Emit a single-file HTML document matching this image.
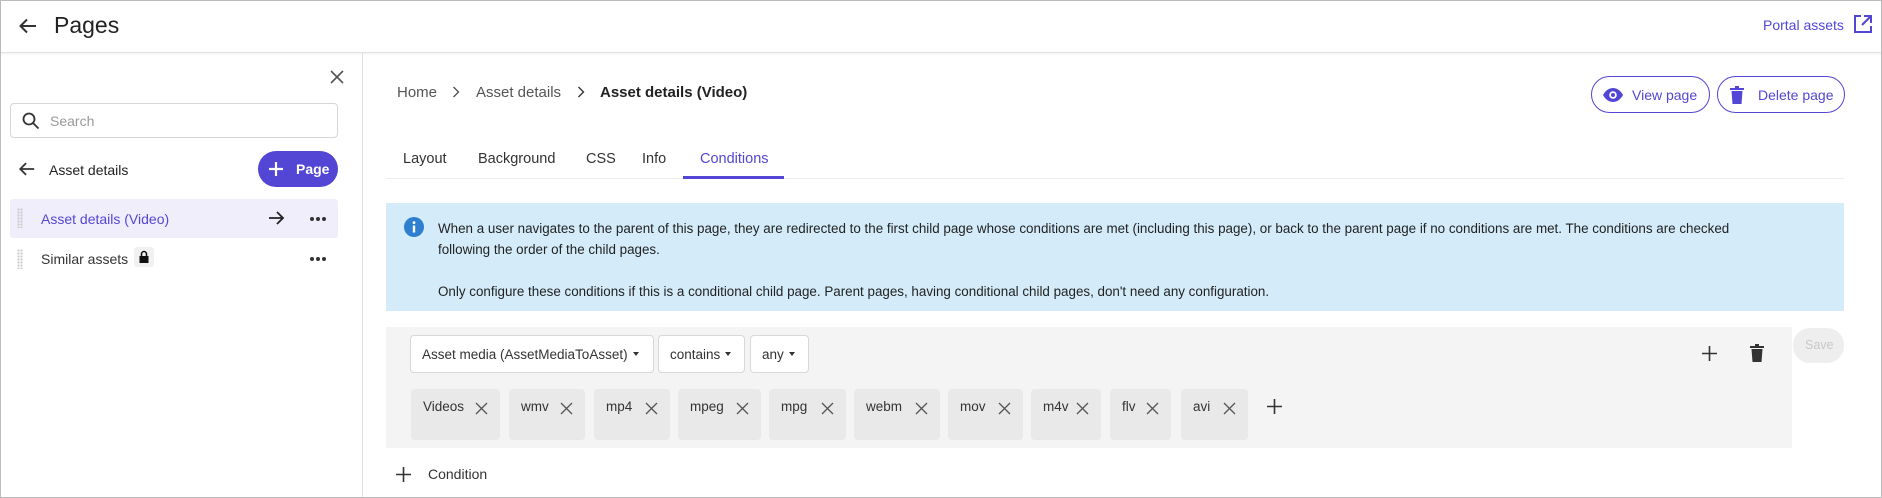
<!DOCTYPE html>
<html><head><meta charset="utf-8"><style>
*{box-sizing:border-box;margin:0;padding:0}
body{width:1882px;height:498px;position:relative;overflow:hidden;background:#fff;font-family:"Liberation Sans",sans-serif;color:#222}
.a{position:absolute;white-space:nowrap}
.frame{position:absolute;left:0;top:0;width:1882px;height:498px;border:1px solid #bdbdbd}
.hdr{position:absolute;left:1px;top:1px;width:1880px;height:52px;border-bottom:1px solid #e0e0e0;box-shadow:0 1px 2px rgba(0,0,0,.06)}
.side{position:absolute;left:362px;top:53px;width:1px;height:444px;background:#e0e0e0}
.btn{position:absolute;border:1.5px solid #5346d4;border-radius:19px;color:#5346d4;font-size:14px;display:flex;align-items:center;white-space:nowrap}
.sel{position:absolute;background:#fff;border:1px solid #d8d8d8;border-radius:4px;height:38px;font-size:13.5px;color:#333;display:flex;align-items:center;padding-left:11px;white-space:nowrap}
.car{display:inline-block;width:0;height:0;border-left:3.5px solid transparent;border-right:3.5px solid transparent;border-top:4px solid #333;margin-left:5px;vertical-align:middle}
.tag{position:absolute;top:389px;height:51px;background:#e9e9e9;border-radius:4px;font-size:13.5px;color:#333;padding:10px 0 0 12px;white-space:nowrap}
.tag svg{position:absolute;top:13px;right:12px}
.dg{position:absolute;width:6px;height:20px;background-image:radial-gradient(circle,#ccc 1px,transparent 1.3px);background-size:3px 3px}
.dots{position:absolute;width:16px;height:4px}
.dots i{position:absolute;top:0;width:4px;height:4px;border-radius:2px;background:#333}
</style></head><body>
<div class="frame"></div>
<div class="hdr"></div>
<svg class="a" style="left:18px;top:16px" width="20" height="20" viewBox="0 0 20 20"><path d="M18 10H3M9 3.5L2.5 10 9 16.5" stroke="#333" stroke-width="2" fill="none"/></svg>
<div class="a" style="left:54px;top:12px;font-size:23px;color:#222">Pages</div>
<div class="a" style="left:1763px;top:17px;font-size:14px;color:#5346d4">Portal assets</div>
<svg class="a" style="left:1853px;top:14px" width="20" height="20" viewBox="0 0 20 20"><path d="M8 2H2v16h16v-6M11 2h7v7M18 2L9 11" stroke="#5346d4" stroke-width="2" fill="none"/></svg>
<div class="side"></div>
<svg class="a" style="left:330px;top:70px" width="14" height="14" viewBox="0 0 14 14"><path d="M1 1L13 13M13 1L1 13" stroke="#555" stroke-width="1.6"/></svg>
<div class="a" style="left:10px;top:103px;width:328px;height:35px;border:1px solid #d6d6d6;border-radius:4px"></div>
<svg class="a" style="left:22px;top:112px" width="18" height="18" viewBox="0 0 18 18"><circle cx="7" cy="7" r="5.5" stroke="#333" stroke-width="1.8" fill="none"/><path d="M11 11l5.5 5.5" stroke="#333" stroke-width="1.8"/></svg>
<div class="a" style="left:50px;top:113px;font-size:14px;color:#999">Search</div>
<svg class="a" style="left:18px;top:160px" width="18" height="18" viewBox="0 0 20 20"><path d="M18 10H3M9 3.5L2.5 10 9 16.5" stroke="#333" stroke-width="2" fill="none"/></svg>
<div class="a" style="left:49px;top:162px;font-size:14px;color:#222">Asset details</div>
<div class="a" style="left:258px;top:151px;width:80px;height:36px;border-radius:18px;background:#5346d4;color:#fff;font-size:14px;font-weight:bold;padding:10px 0 0 38px">Page</div>
<svg class="a" style="left:268px;top:161px" width="16" height="16" viewBox="0 0 16 16"><path d="M8 1v14M1 8h14" stroke="#fff" stroke-width="2.2"/></svg>
<div class="a" style="left:10px;top:199px;width:328px;height:39px;background:#f0eefb;border-radius:3px"></div>
<div class="dg" style="left:17px;top:208px"></div>
<div class="a" style="left:41px;top:211px;font-size:14px;color:#5346d4">Asset details (Video)</div>
<svg class="a" style="left:268px;top:210px" width="17" height="16" viewBox="0 0 17 16"><path d="M1 8h14M9 2l6 6-6 6" stroke="#222" stroke-width="1.8" fill="none"/></svg>
<div class="dots" style="left:310px;top:217px"><i style="left:0"></i><i style="left:6px"></i><i style="left:12px"></i></div>
<div class="dg" style="left:17px;top:249px"></div>
<div class="a" style="left:41px;top:251px;font-size:14px;color:#333">Similar assets</div>
<div class="a" style="left:134px;top:247px;width:20px;height:20px;background:#f1f1f1;border-radius:3px"></div>
<svg class="a" style="left:139px;top:250px" width="10" height="13" viewBox="0 0 10 13"><path d="M2.5 6V4a2.5 2.5 0 015 0v2" stroke="#111" stroke-width="1.5" fill="none"/><rect x="0.5" y="6" width="9" height="7" fill="#111"/></svg>
<div class="dots" style="left:310px;top:257px"><i style="left:0"></i><i style="left:6px"></i><i style="left:12px"></i></div>

<div class="a" style="left:397px;top:84px;font-size:15px;color:#555">Home</div>
<svg class="a" style="left:452px;top:86px" width="8" height="12" viewBox="0 0 8 12"><path d="M1.5 1l5 5-5 5" stroke="#555" stroke-width="1.4" fill="none"/></svg>
<div class="a" style="left:476px;top:84px;font-size:15px;color:#555">Asset details</div>
<svg class="a" style="left:577px;top:86px" width="8" height="12" viewBox="0 0 8 12"><path d="M1.5 1l5 5-5 5" stroke="#333" stroke-width="1.4" fill="none"/></svg>
<div class="a" style="left:600px;top:84px;font-size:15px;color:#222;font-weight:bold">Asset details (Video)</div>
<div class="btn" style="left:1591px;top:76px;width:119px;height:37px"><svg style="margin-left:10px" width="22" height="16" viewBox="0 0 22 16"><path d="M1 8C4 2.5 8 1 11 1s7 1.5 10 7c-3 5.5-7 7-10 7S4 13.5 1 8z" fill="#5346d4"/><circle cx="11" cy="8" r="3.8" fill="#fff"/><circle cx="11" cy="8" r="2" fill="#5346d4"/></svg><span style="margin-left:8px">View page</span></div>
<div class="btn" style="left:1717px;top:76px;width:128px;height:37px"><svg style="margin-left:12px" width="14" height="18" viewBox="0 0 14 18"><rect x="0" y="2" width="14" height="2" fill="#5346d4"/><rect x="5" y="0" width="4" height="2" fill="#5346d4"/><path d="M1.5 5h11l-1 13h-9z" fill="#5346d4"/></svg><span style="margin-left:14px">Delete page</span></div>

<div class="a" style="left:403px;top:151px;font-size:14.5px;color:#333">Layout</div>
<div class="a" style="left:478px;top:151px;font-size:14.5px;color:#333">Background</div>
<div class="a" style="left:586px;top:151px;font-size:14.5px;color:#333">CSS</div>
<div class="a" style="left:642px;top:151px;font-size:14.5px;color:#333">Info</div>
<div class="a" style="left:700px;top:151px;font-size:14.5px;color:#5346d4">Conditions</div>
<div class="a" style="left:386px;top:178px;width:1458px;height:1px;background:#ececec"></div>
<div class="a" style="left:683px;top:176px;width:101px;height:3px;background:#5346d4"></div>

<div class="a" style="left:386px;top:203px;width:1458px;height:108px;background:#d4ecf9"></div>
<svg class="a" style="left:404px;top:217px" width="20" height="20" viewBox="0 0 20 20"><circle cx="10" cy="10" r="10" fill="#2f7fd0"/><rect x="8.8" y="8.5" width="2.4" height="7" fill="#fff"/><circle cx="10" cy="5.6" r="1.4" fill="#fff"/></svg>
<div class="a" style="left:438px;top:218px;font-size:13.4px;color:#222;line-height:21px">When a user navigates to the parent of this page, they are redirected to the first child page whose conditions are met (including this page), or back to the parent page if no conditions are met. The conditions are checked<br>following the order of the child pages.<br><br>Only configure these conditions if this is a conditional child page. Parent pages, having conditional child pages, don't need any configuration.</div>

<div class="a" style="left:386px;top:327px;width:1406px;height:121px;background:#f4f4f4"></div>
<div class="sel" style="left:410px;top:335px;width:244px">Asset media (AssetMediaToAsset)<span class="car"></span></div>
<div class="sel" style="left:658px;top:335px;width:87px">contains<span class="car"></span></div>
<div class="sel" style="left:750px;top:335px;width:59px">any<span class="car"></span></div>
<svg class="a" style="left:1702px;top:346px" width="15" height="15" viewBox="0 0 15 15"><path d="M7.5 0v15M0 7.5h15" stroke="#333" stroke-width="1.6"/></svg>
<svg class="a" style="left:1750px;top:344px" width="14" height="18" viewBox="0 0 14 18"><rect x="0" y="2" width="14" height="2" fill="#333"/><rect x="5" y="0" width="4" height="2" fill="#333"/><path d="M1.5 5h11l-1 13h-9z" fill="#333"/></svg>
<div class="a" style="left:1793px;top:328px;width:51px;height:35px;background:#eeeeee;border-radius:17px;color:#c8c8c8;font-size:12.5px;padding:10px 0 0 12px">Save</div>

<div class="tag" style="left:411px;width:89px">Videos<svg width="13" height="13" viewBox="0 0 13 13"><path d="M1 1l11 11M12 1L1 12" stroke="#555" stroke-width="1.3"/></svg></div>
<div class="tag" style="left:509px;width:76px">wmv<svg width="13" height="13" viewBox="0 0 13 13"><path d="M1 1l11 11M12 1L1 12" stroke="#555" stroke-width="1.3"/></svg></div>
<div class="tag" style="left:594px;width:76px">mp4<svg width="13" height="13" viewBox="0 0 13 13"><path d="M1 1l11 11M12 1L1 12" stroke="#555" stroke-width="1.3"/></svg></div>
<div class="tag" style="left:678px;width:83px">mpeg<svg width="13" height="13" viewBox="0 0 13 13"><path d="M1 1l11 11M12 1L1 12" stroke="#555" stroke-width="1.3"/></svg></div>
<div class="tag" style="left:769px;width:77px">mpg<svg width="13" height="13" viewBox="0 0 13 13"><path d="M1 1l11 11M12 1L1 12" stroke="#555" stroke-width="1.3"/></svg></div>
<div class="tag" style="left:854px;width:86px">webm<svg width="13" height="13" viewBox="0 0 13 13"><path d="M1 1l11 11M12 1L1 12" stroke="#555" stroke-width="1.3"/></svg></div>
<div class="tag" style="left:948px;width:75px">mov<svg width="13" height="13" viewBox="0 0 13 13"><path d="M1 1l11 11M12 1L1 12" stroke="#555" stroke-width="1.3"/></svg></div>
<div class="tag" style="left:1031px;width:70px">m4v<svg width="13" height="13" viewBox="0 0 13 13"><path d="M1 1l11 11M12 1L1 12" stroke="#555" stroke-width="1.3"/></svg></div>
<div class="tag" style="left:1110px;width:61px">flv<svg width="13" height="13" viewBox="0 0 13 13"><path d="M1 1l11 11M12 1L1 12" stroke="#555" stroke-width="1.3"/></svg></div>
<div class="tag" style="left:1181px;width:67px">avi<svg width="13" height="13" viewBox="0 0 13 13"><path d="M1 1l11 11M12 1L1 12" stroke="#555" stroke-width="1.3"/></svg></div>
<svg class="a" style="left:1267px;top:399px" width="15" height="15" viewBox="0 0 15 15"><path d="M7.5 0v15M0 7.5h15" stroke="#333" stroke-width="1.6"/></svg>

<svg class="a" style="left:396px;top:467px" width="15" height="15" viewBox="0 0 15 15"><path d="M7.5 0v15M0 7.5h15" stroke="#333" stroke-width="1.6"/></svg>
<div class="a" style="left:428px;top:466px;font-size:14px;color:#333">Condition</div>
</body></html>
